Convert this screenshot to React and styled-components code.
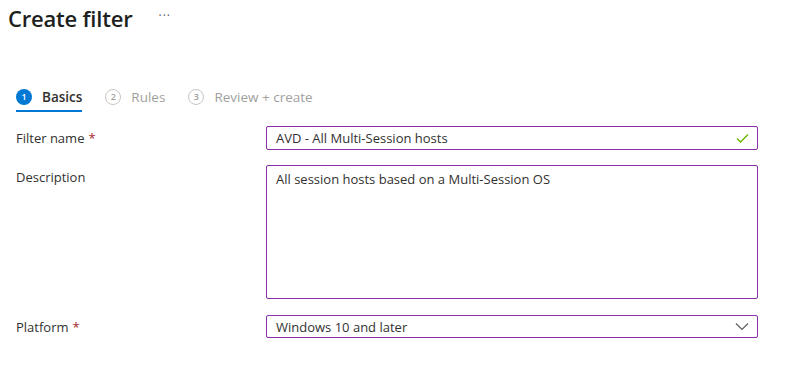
import React from "react";
import styled, { createGlobalStyle } from "styled-components";

const GlobalStyle = createGlobalStyle`
  body {
    margin: 0;
    background: #ffffff;
    font-family: "Open Sans", "Noto Sans", "Liberation Sans", sans-serif;
    color: #323130;
  }
`;

const Page = styled.div`
  width: 792px;
  height: 390px;
  overflow: hidden;
`;

const Header = styled.div`
  display: flex;
  align-items: center;
  height: 36px;
  padding: 0 0 0 8px;
`;

const Title = styled.h1`
  margin: 0;
  font-size: 22px;
  font-weight: 600;
  letter-spacing: -0.2px;
  color: #201f1e;
`;

const More = styled.span`
  margin-left: 26px;
  font-size: 12px;
  color: #605e5c;
  letter-spacing: 1px;
  position: relative;
  top: -3px;
`;

const Steps = styled.div`
  display: flex;
  align-items: stretch;
  margin-top: 45px;
  padding-left: 16px;
  height: 31px;
`;

const Step = styled.div`
  display: flex;
  align-items: center;
  gap: 10px;
  margin-right: 23px;
  font-size: 13.5px;
  font-weight: ${(p) => (p.$active ? 600 : 400)};
  color: ${(p) => (p.$active ? "#323130" : "#a19f9d")};
  border-bottom: 2px solid ${(p) => (p.$active ? "#0078d4" : "transparent")};
  padding-top: 2px;
`;

const Circle = styled.span`
  width: 16px;
  height: 16px;
  border-radius: 50%;
  box-sizing: border-box;
  display: flex;
  align-items: center;
  justify-content: center;
  font-size: 9px;
  font-weight: 600;
  background: ${(p) => (p.$active ? "#0078d4" : "transparent")};
  color: ${(p) => (p.$active ? "#ffffff" : "#a19f9d")};
  border: ${(p) => (p.$active ? "none" : "1px solid #c8c6c4")};
`;

const Form = styled.div`
  display: flex;
  flex-direction: column;
  padding-left: 16px;
  margin-top: 14px;
`;

const Row = styled.div`
  display: grid;
  grid-template-columns: 250px 492px;
  margin-top: ${(p) => p.$top || 0}px;
`;

const Label = styled.div`
  font-size: 13px;
  color: #323130;
  padding-top: 3px;
  line-height: 18px;
`;

const Req = styled.span`
  color: #a4262c;
  margin-left: 4px;
`;

const Field = styled.div`
  box-sizing: border-box;
  height: ${(p) => p.$h}px;
  border: 1px solid #8a2fa6;
  border-radius: 2px;
  display: flex;
  align-items: ${(p) => (p.$multi ? "flex-start" : "center")};
  justify-content: space-between;
  padding: ${(p) => (p.$multi ? "4px 9px" : "0 8px 0 9px")};
  font-size: 13px;
  color: #323130;
  line-height: 18px;
`;

const Check = () => (
  <svg width="13" height="10" viewBox="0 0 13 10" fill="none">
    <path d="M1 5.5 L4.5 9 L12 1.5" stroke="#6bb700" strokeWidth="1.3" />
  </svg>
);

const Chevron = () => (
  <svg width="14" height="9" viewBox="0 0 14 9" fill="none">
    <path d="M1 1.5 L7 7.5 L13 1.5" stroke="#605e5c" strokeWidth="1.2" />
  </svg>
);

const App = () => (
  <Page>
    <GlobalStyle />
    <Header>
      <Title>Create filter</Title>
      <More>···</More>
    </Header>
    <Steps>
      <Step $active>
        <Circle $active>1</Circle>
        Basics
      </Step>
      <Step>
        <Circle>2</Circle>
        Rules
      </Step>
      <Step>
        <Circle>3</Circle>
        Review + create
      </Step>
    </Steps>
    <Form>
      <Row>
        <Label>
          Filter name<Req>*</Req>
        </Label>
        <Field $h={24}>
          AVD - All Multi-Session hosts
          <Check />
        </Field>
      </Row>
      <Row $top={15}>
        <Label>Description</Label>
        <Field $h={134} $multi>
          All session hosts based on a Multi-Session OS
        </Field>
      </Row>
      <Row $top={16}>
        <Label>
          Platform<Req>*</Req>
        </Label>
        <Field $h={23}>
          Windows 10 and later
          <Chevron />
        </Field>
      </Row>
    </Form>
  </Page>
);

export default App;
